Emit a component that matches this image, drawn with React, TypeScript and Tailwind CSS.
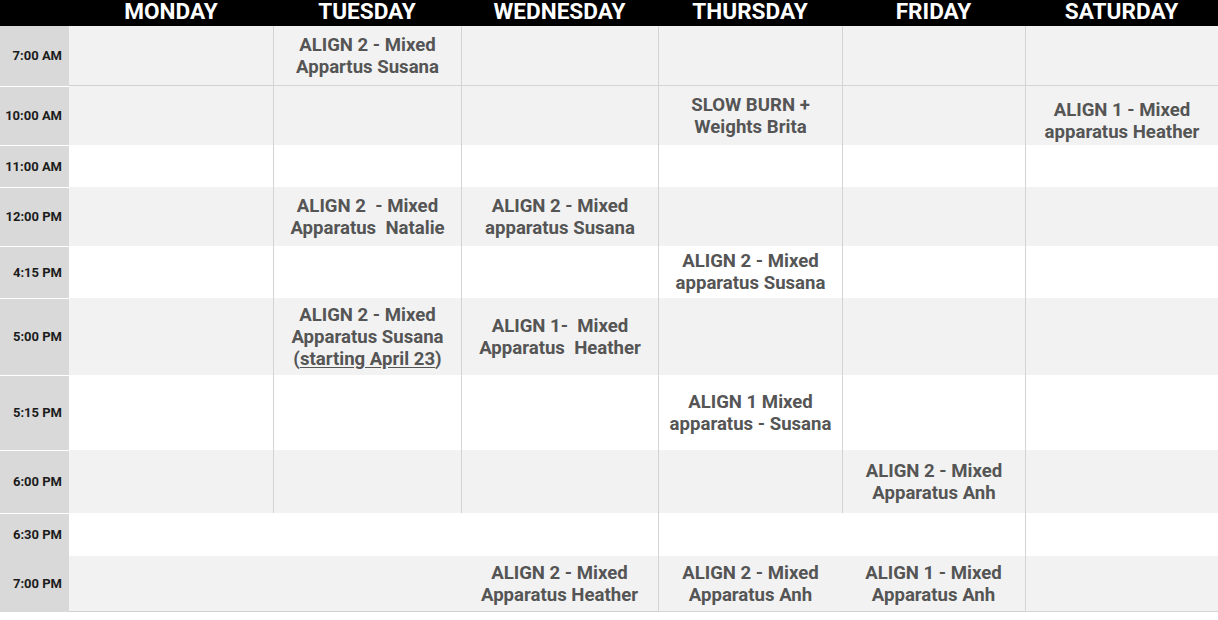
import React from 'react';

type Cell = React.ReactNode | null;

interface Row {
  time: string;
  h: string;
  shade: boolean;
  cells: Cell[];
  // which day columns draw a left border
  lines: boolean[];
  top?: boolean;
  last?: boolean;
  sep?: boolean;
}

const days = ['MONDAY', 'TUESDAY', 'WEDNESDAY', 'THURSDAY', 'FRIDAY', 'SATURDAY'];
const all = [false, true, true, true, true, true];
const late = [false, false, false, true, false, true];
const nb = '\u00a0';

const rows: Row[] = [
  {
    time: '7:00 AM', h: 'h-[60px]', shade: true, lines: all, top: true,
    cells: [null, <>ALIGN 2 - Mixed<br />Appartus Susana</>, null, null, null, null],
  },
  {
    time: '10:00 AM', h: 'h-[59px]', shade: true, lines: all, sep: true,
    cells: [null, null, null, <>SLOW BURN +<br />Weights Brita</>, null, <div className="pt-[10px]">ALIGN 1 - Mixed<br />apparatus Heather</div>],
  },
  { time: '11:00 AM', h: 'h-[42px]', shade: false, lines: all, sep: true, cells: [null, null, null, null, null, null] },
  {
    time: '12:00 PM', h: 'h-[59px]', shade: true, lines: all, sep: true,
    cells: [null, <>ALIGN 2{nb} - Mixed<br />Apparatus{nb} Natalie</>, <>ALIGN 2 - Mixed<br />apparatus Susana</>, null, null, null],
  },
  {
    time: '4:15 PM', h: 'h-[52px]', shade: false, lines: all, sep: true,
    cells: [null, null, null, <>ALIGN 2 - Mixed<br />apparatus Susana</>, null, null],
  },
  {
    time: '5:00 PM', h: 'h-[77px]', shade: true, lines: all, sep: true,
    cells: [
      null,
      <>ALIGN 2 - Mixed<br />Apparatus Susana<br />(<span className="underline underline-offset-2">starting April 23</span>)</>,
      <>ALIGN 1-{nb} Mixed<br />Apparatus{nb} Heather</>,
      null, null, null,
    ],
  },
  {
    time: '5:15 PM', h: 'h-[75px]', shade: false, lines: all, sep: true,
    cells: [null, null, null, <>ALIGN 1 Mixed<br />apparatus - Susana</>, null, null],
  },
  {
    time: '6:00 PM', h: 'h-[63px]', shade: true, lines: all, sep: true,
    cells: [null, null, null, null, <>ALIGN 2 - Mixed<br />Apparatus Anh</>, null],
  },
  { time: '6:30 PM', h: 'h-[43px]', shade: false, lines: late, sep: true, cells: [null, null, null, null, null, null] },
  {
    time: '7:00 PM', h: 'h-[56px]', shade: true, lines: late, last: true,
    cells: [null, null, <>ALIGN 2 - Mixed<br />Apparatus Heather</>, <>ALIGN 2 - Mixed<br />Apparatus Anh</>, <>ALIGN 1 - Mixed<br />Apparatus Anh</>, null],
  },
];

const cols = 'grid grid-cols-[69px_204px_188px_197px_184px_183px_1fr]';

export default function App() {
  return (
    <div className="w-[1218px] bg-white font-['Roboto','Liberation_Sans',sans-serif]">
      <div className={`${cols} h-[26px] bg-black`}>
        <div />
        {days.map((d) => (
          <div key={d} className="text-center text-[22.6px] font-bold leading-[24px] text-white">
            {d}
          </div>
        ))}
      </div>

      {rows.map((r) => (
        <div key={r.time} className={`${cols} ${r.h}`}>
          <div
            className={`flex items-center justify-end bg-[#d9d9d9] pr-[7px] text-[13px] font-bold text-[#1c1c1c] ${
              r.sep ? 'border-t border-white' : ''
            }`}
          >
            {r.time}
          </div>
          {r.cells.map((c, i) => (
            <div
              key={i}
              className={`flex items-center justify-center text-center text-[18.6px] font-bold leading-[22px] text-[#555555] ${
                r.shade ? 'bg-[#f2f2f2]' : 'bg-white'
              } ${r.lines[i] ? 'border-l border-[#d4d4d4]' : ''} ${
                r.top || r.last ? 'border-b border-[#d0d0d0]' : ''
              }`}
            >
              <div>{c}</div>
            </div>
          ))}
        </div>
      ))}
    </div>
  );
}
